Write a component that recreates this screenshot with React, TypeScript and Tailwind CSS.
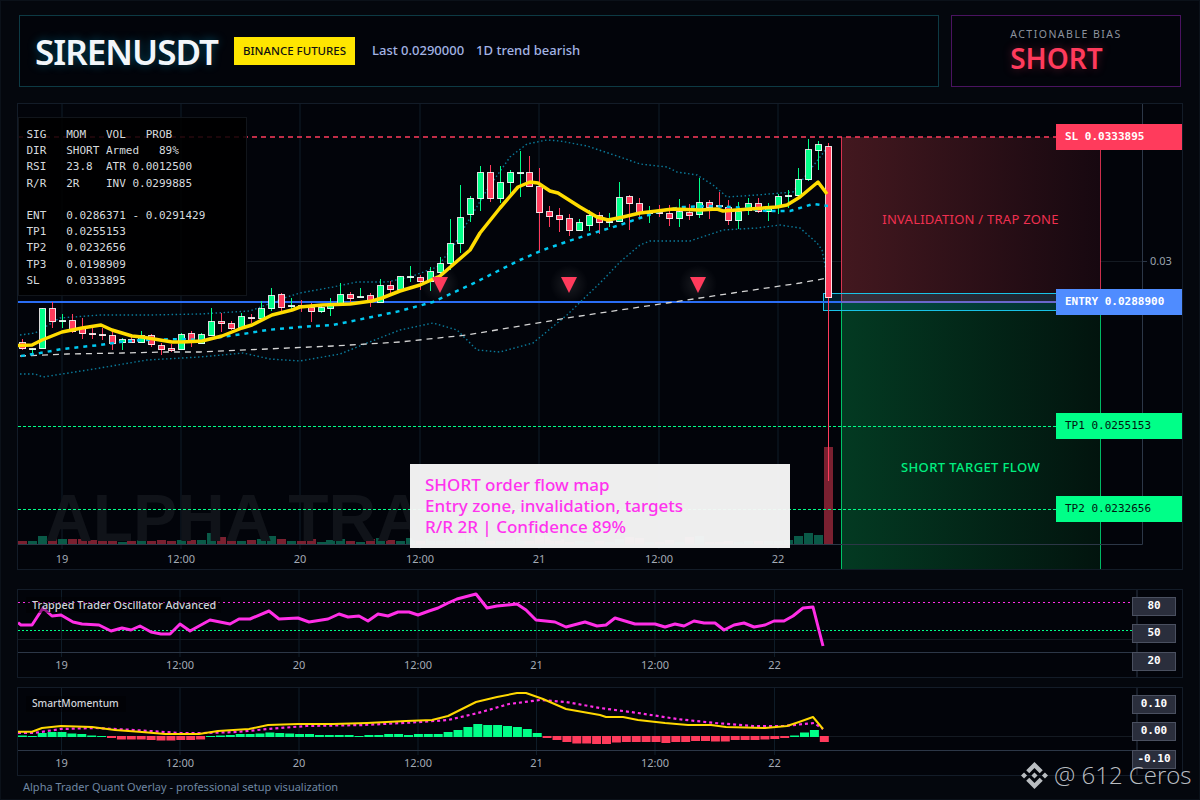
const MONO = "font-['DejaVu_Sans_Mono',monospace]";
const SANS = "font-['Noto_Sans',sans-serif]";

// [isGreen, high, bodyTop, bodyBottom, low] in page pixels
const CANDLES: number[][] = [
  [0, 339, 342, 348, 350], [1, 348, 348, 349, 354], [1, 308, 308, 348, 349], [0, 302, 308, 321, 328],
  [1, 314, 320, 321, 328], [0, 314, 320, 331, 333], [0, 318, 328, 333, 339], [0, 328, 333, 334, 339],
  [0, 328, 334, 335, 340], [0, 332, 335, 343, 350], [1, 338, 339, 342, 350], [0, 337, 339, 342, 343],
  [1, 331, 335, 342, 342], [0, 334, 335, 344, 347], [0, 343, 345, 349, 355], [0, 344, 348, 350, 352],
  [1, 333, 334, 349, 350], [0, 331, 333, 341, 347], [1, 333, 334, 343, 344], [1, 308, 321, 335, 335],
  [0, 313, 321, 323, 332], [0, 321, 323, 328, 330], [1, 313, 316, 327, 328], [0, 314, 317, 318, 323],
  [1, 301, 308, 318, 319], [1, 288, 295, 308, 311], [0, 293, 294, 307, 312], [1, 298, 305, 306, 310],
  [0, 300, 305, 306, 312], [0, 303, 307, 311, 322], [1, 304, 307, 311, 313], [1, 298, 304, 308, 316],
  [1, 283, 294, 303, 304], [0, 292, 294, 298, 302], [1, 288, 296, 297, 298], [0, 293, 295, 300, 307],
  [1, 279, 285, 302, 302], [0, 281, 285, 289, 295], [1, 276, 276, 289, 290], [1, 266, 276, 277, 282],
  [0, 275, 277, 281, 290], [1, 267, 271, 281, 291], [1, 257, 263, 272, 276], [1, 219, 243, 263, 270],
  [1, 185, 217, 243, 253], [1, 196, 198, 214, 222], [1, 166, 172, 198, 211], [0, 165, 172, 198, 202],
  [1, 166, 182, 198, 203], [1, 170, 172, 182, 197], [1, 151, 172, 173, 197], [0, 156, 172, 186, 187],
  [0, 168, 186, 212, 251], [0, 206, 211, 216, 227], [0, 208, 215, 219, 232], [0, 214, 218, 230, 236],
  [1, 219, 222, 230, 231], [1, 210, 215, 225, 231], [0, 212, 215, 222, 234], [1, 213, 221, 222, 227],
  [1, 182, 197, 221, 222], [0, 195, 196, 203, 230], [0, 198, 203, 212, 218], [1, 206, 212, 213, 223],
  [0, 205, 212, 213, 217], [0, 205, 213, 218, 226], [1, 199, 211, 218, 227], [0, 204, 212, 215, 220],
  [1, 178, 202, 214, 218], [0, 200, 202, 207, 219], [0, 192, 205, 206, 208], [0, 200, 207, 220, 225],
  [1, 202, 211, 220, 229], [1, 198, 203, 210, 215], [0, 198, 203, 211, 213], [1, 203, 206, 211, 221],
  [1, 194, 196, 206, 214], [1, 190, 195, 196, 208], [1, 168, 179, 195, 196], [1, 139, 149, 179, 181],
  [1, 141, 144, 150, 170], [0, 143, 146, 297, 481],
];

const VOLUMES = [
  3, 3, 8, 7, 5, 5, 5, 4, 4, 5, 2, 3, 4, 3, 4, 3, 4, 4, 4, 11, 7, 4, 3, 4, 5, 8, 5, 3, 3, 5, 2, 4, 5, 3, 2, 5, 6, 4, 3,
  6, 3, 5, 6, 8, 9, 9, 7, 9, 8, 6, 7, 3, 9, 8, 5, 2, 3, 2, 3, 2, 5, 7, 6, 2, 2, 4, 2, 7, 8, 2, 2, 3, 2, 3, 3, 3, 3, 4,
  8, 11, 9, 97,
];

const HIST = [
  1.5, 1, 4, 5, 5, 3.5, 3, 1.5, 1, -2, -3.5, -3.5, -3.5, -4, -4.5, -4.5, -4, -4, -3.5, 1, 1.5, 2, 3, 3, 3.5, 4.5, 4,
  3.5, 3, 3, 2, 2, 2, 2, 1, 2, 2, 3, 3, 2, 3, 3, 3, 5, 7, 10, 13, 12, 12, 11, 10, 8, 4, -2, -4, -6, -7.5, -7.5, -8, -8,
  -6.5, -6, -6, -6, -6, -7, -6, -6, -5, -5, -5.5, -5.5, -4, -4, -4, -3.5, -3, -2, 1.5, 4.5, 7, -6,
];

const EMA = [[18, 345.5], [32, 345], [42, 340], [62, 332], [82, 328], [101, 325], [112, 330], [132, 336], [142, 337], [172, 342], [182, 342], [202, 341], [222, 336], [242, 328], [252, 325], [272, 315], [292, 310], [300, 307], [322, 305], [350, 304], [372, 301], [382, 298], [400, 291], [420, 285], [440, 276], [470, 250], [480, 233], [500, 208], [518, 187], [530, 182], [538, 183], [550, 191], [558, 193], [580, 207], [597, 217], [608, 220], [623, 217], [640, 213], [657, 211], [673, 209], [700, 210], [717, 209], [723, 211], [750, 209], [777, 207], [787, 205], [800, 197], [818, 182], [827, 194]];
const SLOW = [[21, 356], [40, 353], [62, 349], [100, 345], [120, 342], [142, 340], [182, 339], [200, 340], [243, 334], [267, 330], [300, 327], [333, 325], [367, 318], [400, 311], [433, 302], [470, 285], [500, 270], [520, 260], [543, 250], [563, 243], [587, 235], [620, 225], [640, 218], [660, 211], [683, 207], [707, 206], [733, 207], [767, 211], [790, 211], [813, 204], [828, 206]];
const UPPER = [[20, 335], [35, 333], [60, 318], [100, 315], [150, 315], [200, 314], [250, 311], [287, 297], [300, 293], [333, 287], [357, 282], [387, 282], [410, 277], [437, 267], [453, 247], [467, 223], [487, 190], [510, 157], [527, 144], [547, 140], [560, 141], [587, 146], [620, 157], [640, 164], [667, 167], [677, 172], [697, 175], [713, 185], [727, 197], [757, 195], [793, 192], [810, 170], [827, 148]];
const LOWER = [[20, 374], [35, 374], [43, 377], [100, 368], [147, 360], [200, 357], [243, 353], [270, 359], [300, 361], [340, 354], [367, 343], [400, 330], [433, 323], [457, 330], [477, 350], [500, 352], [533, 343], [567, 315], [603, 280], [620, 262], [640, 245], [650, 241], [690, 241], [723, 230], [757, 228], [780, 225], [800, 228], [817, 243], [822, 250], [828, 280]];
const LONG_MA = [[20, 356], [67, 354], [123, 353], [167, 352], [200, 352], [267, 349], [333, 346], [400, 342], [467, 335], [567, 318], [667, 303], [733, 293], [800, 283], [828, 278]];

const OSC = [[18, 622.7], [21, 625], [32, 625], [43, 608], [52, 616], [61, 615], [73, 622], [82, 624], [99, 625], [111, 631], [122, 628], [131, 630], [140, 626], [151, 632], [161, 634], [170, 634], [180, 624], [190, 631], [210, 620], [230, 624], [239, 619], [250, 619], [269, 611], [279, 619], [298, 618], [309, 622], [328, 619], [339, 614], [348, 617], [359, 616], [368, 621], [378, 614], [388, 616], [398, 612], [409, 612], [418, 615], [429, 611], [438, 608], [448, 603], [457, 599], [476, 594], [487, 608], [497, 606], [517, 604], [526, 610], [536, 620], [555, 622], [566, 627], [585, 622], [597, 626], [606, 625], [615, 618], [635, 624], [655, 624], [665, 627], [675, 624], [684, 626], [694, 621], [704, 623], [715, 623], [724, 630], [734, 625], [744, 623], [754, 627], [765, 625], [774, 621], [784, 621], [793, 616], [803, 608], [813, 607], [823, 646]];
const MOM = [[18, 731.7], [32, 731.7], [42, 728], [61, 726], [92, 727], [115, 730], [142, 732], [165, 734], [199, 734], [218, 731], [249, 729], [268, 725], [298, 724], [333, 724], [367, 723], [406, 721], [432, 720], [448, 716], [476, 702], [497, 697], [517, 693], [526, 693], [543, 699], [566, 709], [600, 715], [606, 717], [623, 717], [638, 720], [665, 723], [688, 725], [711, 725], [726, 727], [765, 728], [787, 726], [799, 722], [813, 717], [823, 729]];
const MOM_SIGNAL = [[18, 733], [34, 733], [61, 729], [96, 728], [134, 730], [180, 733], [203, 733], [237, 732], [268, 729], [306, 726], [364, 725], [421, 722], [448, 720], [478, 713], [509, 704], [540, 700], [566, 702], [600, 708], [638, 713], [677, 719], [715, 723], [753, 726], [784, 726], [814, 723], [823, 729]];

const MAIN_TICKS: [number, string][] = [[62, "19"], [181, "12:00"], [300, "20"], [420, "12:00"], [539, "21"], [659, "12:00"], [778, "22"]];
const SUB_TICKS: [number, string][] = [[61.5, "19"], [180, "12:00"], [299, "20"], [418, "12:00"], [536.5, "21"], [655, "12:00"], [774.5, "22"]];

const INFO = `SIG   MOM   VOL   PROB
DIR   SHORT Armed   89%
RSI   23.8  ATR 0.0012500
R/R   2R    INV 0.0299885

ENT   0.0286371 - 0.0291429
TP1   0.0255153
TP2   0.0232656
TP3   0.0198909
SL    0.0333895`;

const PRICE_TAGS = [
  { label: "SL 0.0333895", cls: "top-[20px] bg-[#ff3b5c] text-white font-bold" },
  { label: "ENTRY 0.0288900", cls: "top-[185px] bg-[#4f8cff] text-white font-bold" },
  { label: "TP1 0.0255153", cls: "top-[309px] bg-[#00ff88] text-[#02150f]" },
  { label: "TP2 0.0232656", cls: "top-[392px] bg-[#00ff88] text-[#02150f]" },
];

const pts = (a: number[][]) => a.map((p) => p.join(",")).join(" ");
const candleX = (i: number) => Math.round(22 + i * 9.95);
const subX = (i: number) => 22.4 + i * 9.9;

function TimeAxis({ ticks, top, bottom, label }: { ticks: [number, string][]; top: number; bottom: number; label: number }) {
  return (
    <>
      {ticks.map(([x, t], i) => (
        <g key={i}>
          <line x1={x} x2={x} y1={top} y2={bottom + 5} stroke="#0e1c28" />
          <text x={x} y={label} textAnchor="middle" className={`${SANS} text-[11px] fill-[#a3aab5]`}>
            {t}
          </text>
        </g>
      ))}
    </>
  );
}

function SubBadge({ text, cls }: { text: string; cls: string }) {
  return (
    <div className={`absolute right-[6px] w-[44px] h-[19px] flex items-center justify-center bg-[#2a2e3c] border border-[#4a5060] text-white text-[11px] font-bold ${MONO} ${cls}`}>
      {text}
    </div>
  );
}

function Triangle({ x }: { x: number }) {
  return (
    <g>
      <circle cx={x} cy={284} r={19} fill="url(#triGlow)" />
      <polygon points={`${x - 8},277 ${x + 8},277 ${x},293`} fill="#ff3b5c" />
    </g>
  );
}

export default function App() {
  return (
    <div className={`relative w-[1200px] h-[800px] overflow-hidden bg-[#04070d] border border-[#0b1119] px-[16px] pt-[14px] flex flex-col ${SANS}`}>
      {/* header */}
      <div className="flex gap-3 px-[2px] h-[72px] shrink-0">
        <div className="flex-1 flex items-center pl-[15px] bg-[#02040a] border border-[#0d3a44]">
          <span className="w-[199px] text-[#f2f6fa] text-[35px] tracking-[-1px] font-semibold leading-none [text-shadow:0_0_10px_rgba(0,200,255,0.35)]">SIRENUSDT</span>
          <span className="w-[121px] h-[28px] flex items-center justify-center bg-[#ffe600] text-[#111] text-[11.5px] font-medium">BINANCE FUTURES</span>
          <span className="ml-[17px] text-[#a3b4e4] text-[13px] font-medium">Last 0.0290000</span>
          <span className="ml-[12px] text-[#a3b4e4] text-[13px] font-medium">1D trend bearish</span>
        </div>
        <div className="w-[230px] flex justify-center items-center bg-[#02040a] border border-[#4a1360]">
          <div className="flex flex-col items-start">
            <span className="text-[#8d939e] text-[10.5px] tracking-[1.5px] leading-[14px]">ACTIONABLE BIAS</span>
            <span className="text-[#ff3b5c] text-[28px] font-semibold leading-[34px] [text-shadow:0_0_10px_rgba(255,59,92,0.35)]">SHORT</span>
          </div>
        </div>
      </div>

      {/* main chart */}
      <div className="relative mt-[16px] h-[467px] shrink-0 bg-[#02040a] border border-[#131c28]">
        <svg width="1164" height="465" viewBox="18 104 1164 465" className="block">
          <defs>
            <linearGradient id="redZone" x1="0" x2="1" y1="0" y2="0">
              <stop offset="0" stopColor="#43181f" />
              <stop offset="1" stopColor="#170810" />
            </linearGradient>
            <linearGradient id="greenZone" x1="0" x2="1" y1="0" y2="0">
              <stop offset="0" stopColor="#033a22" />
              <stop offset="1" stopColor="#02140e" />
            </linearGradient>
            <radialGradient id="triGlow">
              <stop offset="0" stopColor="#ffffff" stopOpacity="0.1" />
              <stop offset="1" stopColor="#ffffff" stopOpacity="0" />
            </radialGradient>
          </defs>

          <line x1="247" x2="1147" y1="261.5" y2="261.5" stroke="#141a22" />
          <TimeAxis ticks={MAIN_TICKS} top={104} bottom={544} label={563} />

          {/* volume */}
          {VOLUMES.map((v, i) => (
            <rect key={i} x={candleX(i) - 4} y={544 - v} width={9} height={v} fill={CANDLES[i][0] ? "#0a5a48" : "#7a2030"} />
          ))}

          <text x="45" y="541" className="font-['Liberation_Sans',sans-serif] text-[66px] font-bold fill-[#101319]">
            ALPHA TRADER
          </text>

          {/* zones */}
          <rect x="841" y="137" width="259" height="165" fill="url(#redZone)" />
          <rect x="841" y="302" width="259" height="268" fill="url(#greenZone)" />
          <line x1="841.5" x2="841.5" y1="137" y2="302" stroke="#ff3b5c" strokeOpacity="0.8" />
          <line x1="1100.5" x2="1100.5" y1="137" y2="302" stroke="#ff3b5c" strokeOpacity="0.8" />
          <line x1="841.5" x2="841.5" y1="302" y2="570" stroke="#00e67a" strokeOpacity="0.8" />
          <line x1="1100.5" x2="1100.5" y1="302" y2="570" stroke="#00e67a" strokeOpacity="0.8" />
          <rect x="823.5" y="293.5" width="233" height="17" fill="#00c8f0" fillOpacity="0.14" stroke="#19c3e6" />

          {/* axes */}
          <line x1="18" x2="1142.5" y1="544.5" y2="544.5" stroke="#2c3747" />
          <line x1="1142.5" x2="1142.5" y1="104" y2="544.5" stroke="#2c3747" />
          <line x1="1142" x2="1147" y1="261.5" y2="261.5" stroke="#2c3747" />
          <text x="1150" y="265" className={`${SANS} text-[11px] fill-[#9aa3ae]`}>0.03</text>

          {/* levels */}
          <line x1="18" x2="1056" y1="137" y2="137" stroke="#ff3b5c" strokeWidth="1.5" strokeDasharray="5 4" />
          <line x1="18" x2="1056" y1="302" y2="302" stroke="#2a6df4" strokeWidth="2" />
          <line x1="841" x2="1056" y1="302" y2="302" stroke="#ff5a6e" strokeOpacity="0.6" />
          <line x1="18" x2="1056" y1="426.5" y2="426.5" stroke="#00ff88" strokeDasharray="3 2" />
          <line x1="18" x2="1056" y1="509.5" y2="509.5" stroke="#00ff88" strokeDasharray="3 2" />

          {/* bands and averages */}
          <polyline points={pts(UPPER)} fill="none" stroke="#0b7a9a" strokeWidth="1.4" strokeDasharray="1.5 2.5" />
          <polyline points={pts(LOWER)} fill="none" stroke="#0b7a9a" strokeWidth="1.4" strokeDasharray="1.5 2.5" />
          <polyline points={pts(LONG_MA)} fill="none" stroke="#d4d4d4" strokeWidth="1.3" strokeDasharray="6 5" />

          {/* candles */}
          {CANDLES.map(([green, high, top, bottom, low], i) => {
            const x = candleX(i);
            const c = green ? "#00ff88" : "#ff3b5c";
            return (
              <g key={i}>
                <line x1={x + 0.5} x2={x + 0.5} y1={high} y2={low} stroke={c} />
                <rect x={x - 2.5} y={top + 0.5} width={6} height={Math.max(bottom - top, 1)} fill={c} stroke="#ffffff" strokeOpacity="0.85" shapeRendering="crispEdges" />
              </g>
            );
          })}

          <polyline points={pts(SLOW)} fill="none" stroke="#00c8f0" strokeWidth="2.5" strokeDasharray="4 5" />
          <polyline points={pts(EMA)} fill="none" stroke="#ffdc00" strokeWidth="3.5" strokeLinejoin="round" />

          <Triangle x={440} />
          <Triangle x={569} />
          <Triangle x={698} />
        </svg>

        <div className={`absolute left-0 top-[13px] w-[229px] h-[179px] pl-[7.5px] pt-[9px] bg-black/85 border border-[#11151b] whitespace-pre text-[11px] leading-[16.2px] text-[#d6dade] ${MONO}`}>
          {INFO}
        </div>

        <div className="absolute left-[823px] top-[106px] w-[259px] text-center text-[13px] text-[#f03050] tracking-[0.25px]">INVALIDATION / TRAP ZONE</div>
        <div className="absolute left-[823px] top-[354px] w-[259px] text-center text-[13px] font-medium text-[#00f080] tracking-[0.4px]">SHORT TARGET FLOW</div>

        {PRICE_TAGS.map((t) => (
          <div key={t.label} className={`absolute right-0 w-[126px] h-[26px] pl-[9px] flex items-center text-[11px] ${MONO} ${t.cls}`}>
            {t.label}
          </div>
        ))}

        <div className="absolute left-[392px] top-[360px] w-[380px] h-[84px] pl-[15px] pt-[10px] bg-[#f8f8f8]/96 text-[#ff33ee] text-[17px] leading-[21px] font-medium">
          <div>SHORT order flow map</div>
          <div>Entry zone, invalidation, targets</div>
          <div>R/R 2R | Confidence 89%</div>
        </div>
      </div>

      {/* oscillator */}
      <div className="relative mt-[19px] h-[89px] shrink-0 bg-[#02040a] border border-[#131c28]">
        <svg width="1164" height="87" viewBox="18 590 1164 87" className="block">
          <line x1="18" x2="1137" y1="639.5" y2="639.5" stroke="#141a22" />
          <TimeAxis ticks={SUB_TICKS} top={590} bottom={652} label={669} />
          <line x1="18" x2="1137" y1="652.5" y2="652.5" stroke="#2c3747" />
          <line x1="1137" x2="1137" y1="590" y2="677" stroke="#2c3747" />
          <line x1="18" x2="1133" y1="602.5" y2="602.5" stroke="#ff2ee6" strokeDasharray="2 3" />
          <line x1="18" x2="1133" y1="630.5" y2="630.5" stroke="#00ff88" strokeDasharray="2 2" />
          <polyline points={pts(OSC)} fill="none" stroke="#ff2ee6" strokeWidth="3" strokeLinejoin="round" />
        </svg>
        <div className="absolute left-[8px] top-[7px] h-[16px] w-[195px] pl-[6px] flex items-center bg-black/40 text-[#cfd3da] text-[10.8px] font-medium">Trapped Trader Oscillator Advanced</div>
        <SubBadge text="80" cls="top-[7px]" />
        <SubBadge text="50" cls="top-[34px]" />
        <SubBadge text="20" cls="top-[62px]" />
      </div>

      {/* momentum */}
      <div className="relative mt-[9px] h-[89px] shrink-0 bg-[#02040a] border border-[#131c28]">
        <svg width="1164" height="87" viewBox="18 688 1164 87" className="block">
          <line x1="18" x2="1137" y1="736.5" y2="736.5" stroke="#141a22" />
          <TimeAxis ticks={SUB_TICKS} top={688} bottom={750} label={767} />
          <line x1="18" x2="1137" y1="750.5" y2="750.5" stroke="#2c3747" />
          <line x1="1137" x2="1137" y1="688" y2="775" stroke="#2c3747" />
          {HIST.map((v, i) => (
            <rect key={i} x={subX(i) - 4.5} y={v > 0 ? 737 - v : 736} width={9} height={Math.abs(v)} fill={v > 0 ? "#00ff88" : "#ff3b5c"} />
          ))}
          <polyline points={pts(MOM_SIGNAL)} fill="none" stroke="#ff2ee6" strokeWidth="2.2" strokeDasharray="3 3" />
          <polyline points={pts(MOM)} fill="none" stroke="#ffd800" strokeWidth="2" strokeLinejoin="round" />
        </svg>
        <div className="absolute left-[8px] top-[8px] h-[16px] w-[100px] pl-[6px] flex items-center bg-black/40 text-[#cfd3da] text-[10.2px] font-medium">SmartMomentum</div>
        <SubBadge text="0.10" cls="top-[7px]" />
        <SubBadge text="0.00" cls="top-[34px]" />
        <SubBadge text="-0.10" cls="top-[62px]" />
      </div>

      <div className="pl-[6px] mt-[4px] text-[#6f87a3] text-[11px] leading-[14px]">Alpha Trader Quant Overlay - professional setup visualization</div>

      {/* watermark */}
      <div className="absolute left-[1020px] top-[759px] flex items-center gap-[6px] text-[#b9bdc1] text-[24px] leading-[30px] font-['Open_Sans',sans-serif] font-light whitespace-nowrap">
        <svg width="27" height="27" viewBox="0 0 24 24" fill="#b9bdc1">
          <path d="M16.624 13.9202l2.7175 2.7154-7.353 7.353-7.353-7.352 2.7175-2.7164 4.6355 4.6595 4.6356-4.6595zm4.6366-4.6366L24 12l-2.7154 2.7164L18.5682 12l2.6924-2.7164zm-9.272.001l2.7163 2.6914-2.7164 2.7174v-.001L9.2721 12l2.7164-2.7154zm-9.2722-.001L5.4088 12l-2.6914 2.6924L0 12l2.7164-2.7164zM11.9885.0115l7.353 7.329-2.7174 2.7154-4.6356-4.6356-4.6355 4.6595-2.7174-2.7154 7.353-7.353z" />
        </svg>
        <span>@ 612 Ceros</span>
      </div>
    </div>
  );
}
